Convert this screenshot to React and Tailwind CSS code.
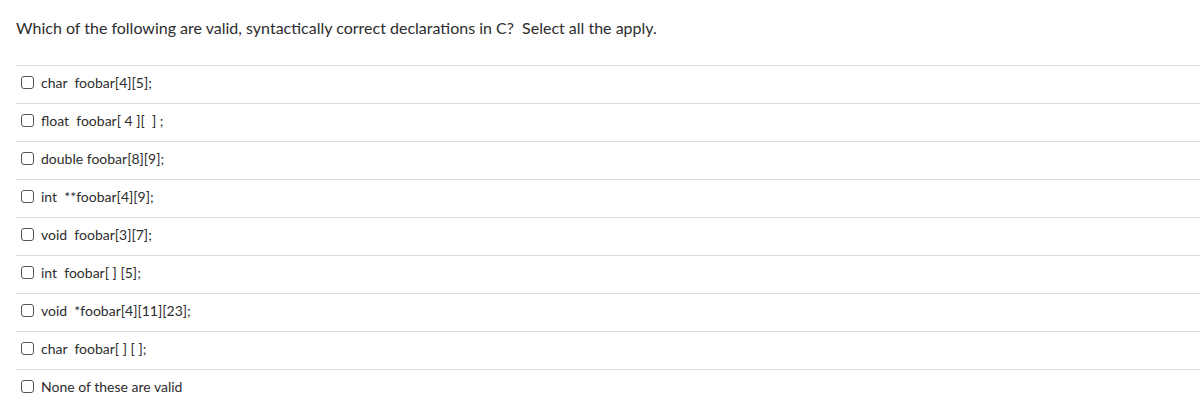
import React from "react";

const options = [
  "char  foobar[4][5];",
  "float  foobar[ 4 ][  ] ;",
  "double foobar[8][9];",
  "int  **foobar[4][9];",
  "void  foobar[3][7];",
  "int  foobar[ ] [5];",
  "void  *foobar[4][11][23];",
  "char  foobar[ ] [ ];",
  "None of these are valid",
];

export default function App() {
  return (
    <div className="w-[1200px] h-[417px] bg-white pl-4 text-[#2d2d2d] font-['Lato','Liberation_Sans',sans-serif] overflow-hidden">
      <div className="pt-[18px] h-[65px] text-[16px] leading-[20px]">
        Which of the following are valid, syntactically correct declarations in C?&nbsp; Select all the apply.
      </div>
      {options.map((opt, i) => (
        <label
          key={i}
          className="flex items-center h-[38px] pb-[5px] border-t border-[#dcdcdc] text-[14px] whitespace-pre"
        >
          <span className="ml-[5px] mr-[7px] w-[13px] h-[13px] rounded-[3px] border border-[#555] bg-white" />
          {opt}
        </label>
      ))}
    </div>
  );
}
